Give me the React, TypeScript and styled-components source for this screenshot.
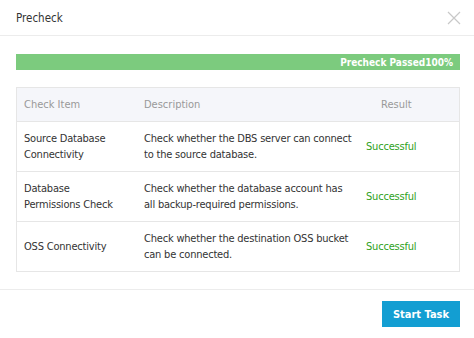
import * as React from 'react';
import styled, { createGlobalStyle } from 'styled-components';

const Global = createGlobalStyle`
  html, body { margin: 0; padding: 0; background: #ffffff; }
  body { font-family: "DejaVu Sans Condensed", "DejaVu Sans", sans-serif; color: #333; }
`;

const Dialog = styled.div`
  box-sizing: border-box;
  width: 474px;
  height: 338px;
  background: #fff;
  display: flex;
  flex-direction: column;
`;

const Header = styled.div`
  height: 36px;
  box-sizing: border-box;
  padding: 0 13px 0 16px;
  display: flex;
  align-items: center;
  justify-content: space-between;
  border-bottom: 1px solid #ececec;
`;

const Title = styled.div`
  font-size: 11.5px;
  color: #333;
`;

const Close = styled.button`
  border: none;
  background: none;
  padding: 0;
  width: 14px;
  height: 14px;
  cursor: pointer;
  display: flex;
`;

const Body = styled.div`
  flex: 1;
  padding: 18px 14px 0 16px;
  display: flex;
  flex-direction: column;
  gap: 17px;
  border-bottom: 1px solid #ececec;
`;

const Progress = styled.div`
  height: 16px;
  background: #7ccb7e;
  color: #fff;
  font-size: 10px;
  font-weight: bold;
  display: flex;
  align-items: center;
  justify-content: flex-end;
  padding-right: 7px;
`;

const Table = styled.div`
  border: 1px solid #e6e6e6;
  display: grid;
  grid-template-columns: 120px 222px 1fr;
`;

const HeadCell = styled.div<{ $pad?: number }>`
  height: 33px;
  background: #f5f6fa;
  border-bottom: 1px solid #e6e6e6;
  color: #999;
  font-size: 11px;
  display: flex;
  align-items: center;
  padding: 0 0 0 ${p => p.$pad ?? 7}px;
`;

const Cell = styled.div<{ $last?: boolean; $ok?: boolean; $right?: number }>`
  height: 49px;
  border-bottom: ${p => (p.$last ? 'none' : '1px solid #e6e6e6')};
  font-size: 11px;
  letter-spacing: -0.2px;
  line-height: 16px;
  color: ${p => (p.$ok ? '#2ea121' : '#333')};
  display: flex;
  flex-direction: column;
  justify-content: center;
  padding: 0 ${p => p.$right ?? 0}px 0 7px;
`;

const Line = styled.span`
  display: block;
  white-space: nowrap;
`;

const Footer = styled.div`
  height: 48px;
  display: flex;
  justify-content: flex-end;
  align-items: center;
  padding: 0 14px 0 0;
`;

const Primary = styled.button`
  width: 78px;
  height: 26px;
  border: none;
  background: #139ed2;
  color: #fff;
  font-family: inherit;
  font-size: 11px;
  font-weight: bold;
  cursor: pointer;
`;

const rows = [
  {
    item: 'Source Database Connectivity',
    desc: ['Check whether the DBS server can connect', 'to the source database.'],
  },
  {
    item: 'Database Permissions Check',
    desc: ['Check whether the database account has', 'all backup-required permissions.'],
  },
  {
    item: 'OSS Connectivity',
    desc: ['Check whether the destination OSS bucket', 'can be connected.'],
  },
];

export default function App() {
  return (
    <Dialog>
      <Global />
      <Header>
        <Title>Precheck</Title>
        <Close aria-label="close">
          <svg width="14" height="14" viewBox="0 0 14 14">
            <path d="M1 1L13 13M13 1L1 13" stroke="#c8c8c8" strokeWidth="1.2" fill="none" />
          </svg>
        </Close>
      </Header>
      <Body>
        <Progress>Precheck Passed100%</Progress>
        <Table>
          <HeadCell>Check Item</HeadCell>
          <HeadCell>Description</HeadCell>
          <HeadCell $pad={22}>Result</HeadCell>
          {rows.map((r, i) => {
            const last = i === rows.length - 1;
            return (
              <React.Fragment key={r.item}>
                <Cell $last={last} $right={10}>{r.item}</Cell>
                <Cell $last={last}>
                  {r.desc.map(l => <Line key={l}>{l}</Line>)}
                </Cell>
                <Cell $last={last} $ok>Successful</Cell>
              </React.Fragment>
            );
          })}
        </Table>
      </Body>
      <Footer>
        <Primary>Start Task</Primary>
      </Footer>
    </Dialog>
  );
}
